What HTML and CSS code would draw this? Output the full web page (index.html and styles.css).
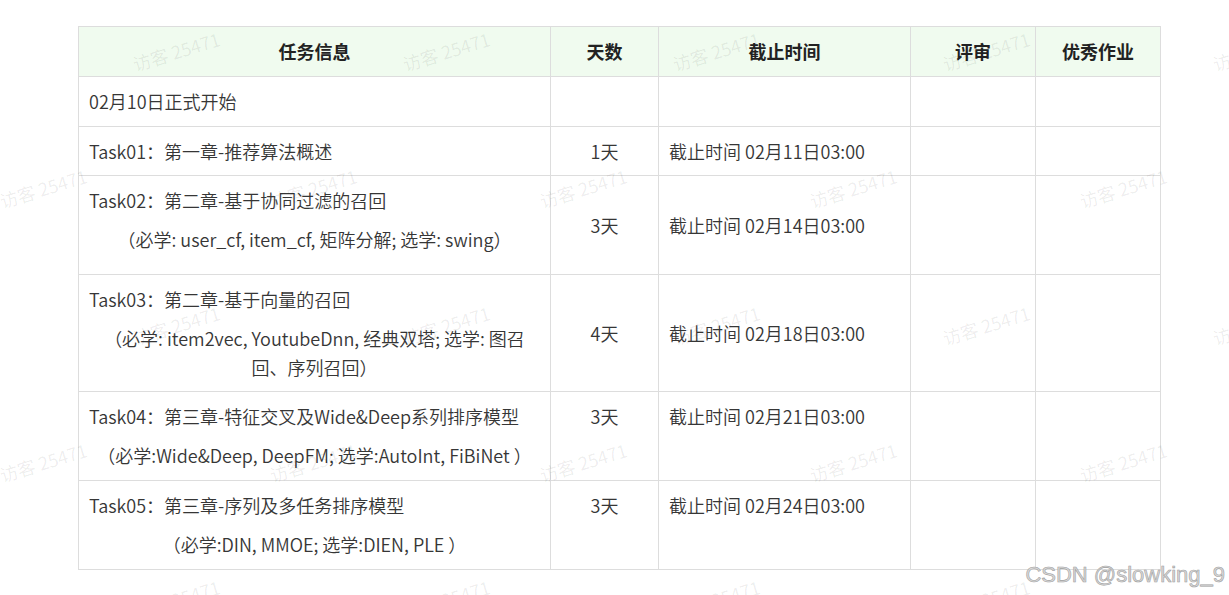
FILE: index.html
```html
<!DOCTYPE html>
<html lang="zh-CN">
<head>
<meta charset="utf-8">
<title>任务安排</title>
<link rel="stylesheet" href="styles.css">
</head>
<body>
<div class="page">
  <table class="tasks">
    <colgroup>
      <col class="c-info"><col class="c-days"><col class="c-dead"><col class="c-review"><col class="c-best">
    </colgroup>
    <thead>
      <tr>
        <th>任务信息</th>
        <th>天数</th>
        <th>截止时间</th>
        <th>评审</th>
        <th>优秀作业</th>
      </tr>
    </thead>
    <tbody>
      <tr>
        <td>02月10日正式开始</td>
        <td class="center"></td>
        <td></td>
        <td></td>
        <td></td>
      </tr>
      <tr>
        <td>Task01：第一章-推荐算法概述</td>
        <td class="center">1天</td>
        <td>截止时间 02月11日03:00</td>
        <td></td>
        <td></td>
      </tr>
      <tr>
        <td class="extra">Task02：第二章-基于协同过滤的召回<p class="sub">（必学: user_cf, item_cf, 矩阵分解; 选学: swing）</p></td>
        <td class="center">3天</td>
        <td>截止时间 02月14日03:00</td>
        <td></td>
        <td></td>
      </tr>
      <tr>
        <td>Task03：第二章-基于向量的召回<p class="sub">（必学: item2vec, YoutubeDnn, 经典双塔; 选学: 图召回、序列召回）</p></td>
        <td class="center">4天</td>
        <td>截止时间 02月18日03:00</td>
        <td></td>
        <td></td>
      </tr>
      <tr class="top">
        <td>Task04：第三章-特征交叉及Wide&amp;Deep系列排序模型<p class="sub">（必学:Wide&amp;Deep, DeepFM; 选学:AutoInt, FiBiNet ）</p></td>
        <td class="center">3天</td>
        <td>截止时间 02月21日03:00</td>
        <td></td>
        <td></td>
      </tr>
      <tr class="top">
        <td>Task05：第三章-序列及多任务排序模型<p class="sub">（必学:DIN, MMOE; 选学:DIEN, PLE ）</p></td>
        <td class="center">3天</td>
        <td>截止时间 02月24日03:00</td>
        <td></td>
        <td></td>
      </tr>
    </tbody>
  </table>
</div>

<div class="watermarks" aria-hidden="true">
  <div class="wm-row wm-a"><span>访客 25471</span><span>访客 25471</span><span>访客 25471</span><span>访客 25471</span><span>访客 25471</span></div>
  <div class="wm-row wm-b"><span>访客 25471</span><span>访客 25471</span><span>访客 25471</span><span>访客 25471</span><span>访客 25471</span></div>
  <div class="wm-row wm-a"><span>访客 25471</span><span>访客 25471</span><span>访客 25471</span><span>访客 25471</span><span>访客 25471</span></div>
  <div class="wm-row wm-b"><span>访客 25471</span><span>访客 25471</span><span>访客 25471</span><span>访客 25471</span><span>访客 25471</span></div>
  <div class="wm-row wm-a"><span>访客 25471</span><span>访客 25471</span><span>访客 25471</span><span>访客 25471</span><span>访客 25471</span></div>
</div>

<div class="credit">CSDN @slowking_9</div>
</body>
</html>
```

FILE: styles.css
```css
html, body {
  margin: 0;
  padding: 0;
  background: #ffffff;
}

body {
  width: 1229px;
  height: 595px;
  overflow: hidden;
  position: relative;
  font-family: "Noto Sans CJK SC", "Noto Sans", sans-serif;
  color: #363636;
}

.page {
  padding: 26px 0 0 78px;
}

.tasks {
  border-collapse: collapse;
  table-layout: fixed;
  width: 1083px;
  font-size: 18px;
  line-height: 28.8px;
  font-weight: 350;
}

.c-info { width: 472px; }
.c-days { width: 108px; }
.c-dead { width: 252px; }
.c-review { width: 125px; }
.c-best { width: 125px; }

.tasks th,
.tasks td {
  border: 1px solid #dddddd;
  padding: 10px 10px;
  vertical-align: middle;
  text-align: left;
}

.tasks th {
  background: #f0fbef;
  color: #222222;
  font-weight: 700;
  text-align: center;
}

.tasks td.center {
  text-align: center;
}

.tasks tr.top td {
  vertical-align: top;
}

.tasks td.extra {
  padding-bottom: 20px;
}

.sub {
  margin: 10px 0 0;
  text-align: center;
}

/* watermark overlay */
.watermarks {
  position: absolute;
  inset: 0;
  overflow: hidden;
  pointer-events: none;
}

.wm-row {
  display: flex;
  height: 137px;
}

.wm-row:first-child {
  margin-top: -18px;
}

.wm-a { margin-left: 41px; }
.wm-b { margin-left: -92px; }

.wm-row span {
  flex: 0 0 270px;
  display: flex;
  align-items: center;
  justify-content: center;
  font-size: 18px;
  color: rgba(0, 0, 0, 0.075);
  transform: rotate(-17deg);
  white-space: nowrap;
}

.credit {
  position: absolute;
  right: 4px;
  bottom: 8px;
  font-family: "Liberation Sans", Arial, sans-serif;
  font-size: 22px;
  line-height: 24px;
  color: #dadada;
  -webkit-text-stroke: 0.6px #a0a0a0;
  white-space: nowrap;
}
```
